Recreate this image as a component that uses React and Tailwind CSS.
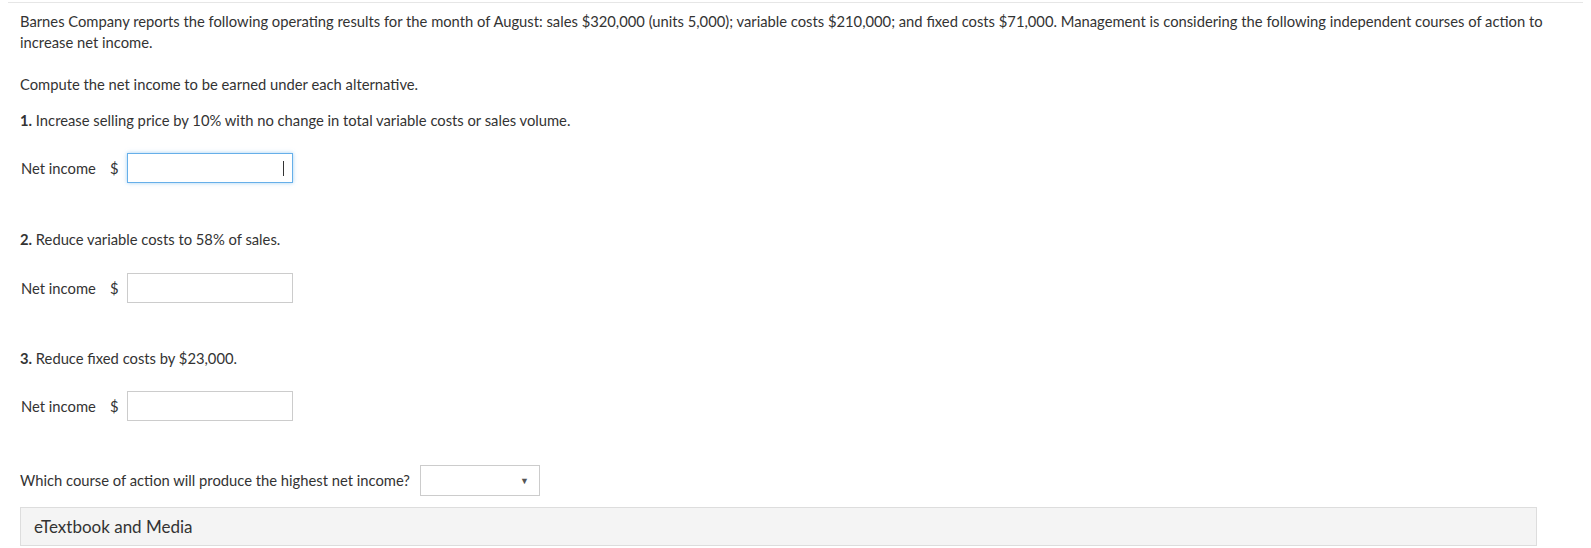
export default function App() {
  const font = { fontFamily: 'Lato, "Open Sans", sans-serif' };
  return (
    <div className="w-[1591px] h-[548px] bg-white text-[#333] overflow-hidden" style={font}>
      <div className="mx-[8px] mt-[2px] border-t border-[#e6e6e6]" />
      <div className="px-[20px] text-[14.75px] leading-[21px]">
        <p className="mt-[8px]">
          Barnes Company reports the following operating results for the month of August: sales $320,000 (units 5,000); variable costs $210,000; and fixed costs $71,000. Management is considering the following independent courses of action to increase net income.
        </p>
        <p className="mt-[21px]">Compute the net income to be earned under each alternative.</p>
        <p className="mt-[15px]"><b>1.</b> Increase selling price by 10% with no change in total variable costs or sales volume.</p>
        <div className="mt-[22px] flex items-center h-[30px]">
          <span className="ml-[1px] w-[89px]">Net income</span>
          <span className="w-[17px]">$</span>
          <div className="w-[166px] h-[30px] border border-[#66afe9] shadow-[0_0_4px_rgba(102,175,233,0.6)] flex items-center justify-end pr-[8px]">
            <div className="w-px h-[15px] bg-[#333]" />
          </div>
        </div>
        <p className="mt-[46px]"><b>2.</b> Reduce variable costs to 58% of sales.</p>
        <div className="mt-[23px] flex items-center h-[30px]">
          <span className="ml-[1px] w-[89px]">Net income</span>
          <span className="w-[17px]">$</span>
          <div className="w-[166px] h-[30px] border border-[#ccc]" />
        </div>
        <p className="mt-[45px]"><b>3.</b> Reduce fixed costs by $23,000.</p>
        <div className="mt-[22px] flex items-center h-[30px]">
          <span className="ml-[1px] w-[89px]">Net income</span>
          <span className="w-[17px]">$</span>
          <div className="w-[166px] h-[30px] border border-[#ccc]" />
        </div>
        <div className="mt-[44px] flex items-center h-[31px]">
          <span>Which course of action will produce the highest net income?</span>
          <div className="ml-[10px] w-[120px] h-[31px] border border-[#ccc] flex items-center justify-end pr-[10px]">
            <span className="text-[9px] text-[#555]">▼</span>
          </div>
        </div>
        <div className="mt-[11px] w-[1517px] h-[39px] bg-[#f4f4f4] border border-[#ddd] flex items-center px-[13px] text-[17px] text-[#333]">
          eTextbook and Media
        </div>
      </div>
    </div>
  );
}
